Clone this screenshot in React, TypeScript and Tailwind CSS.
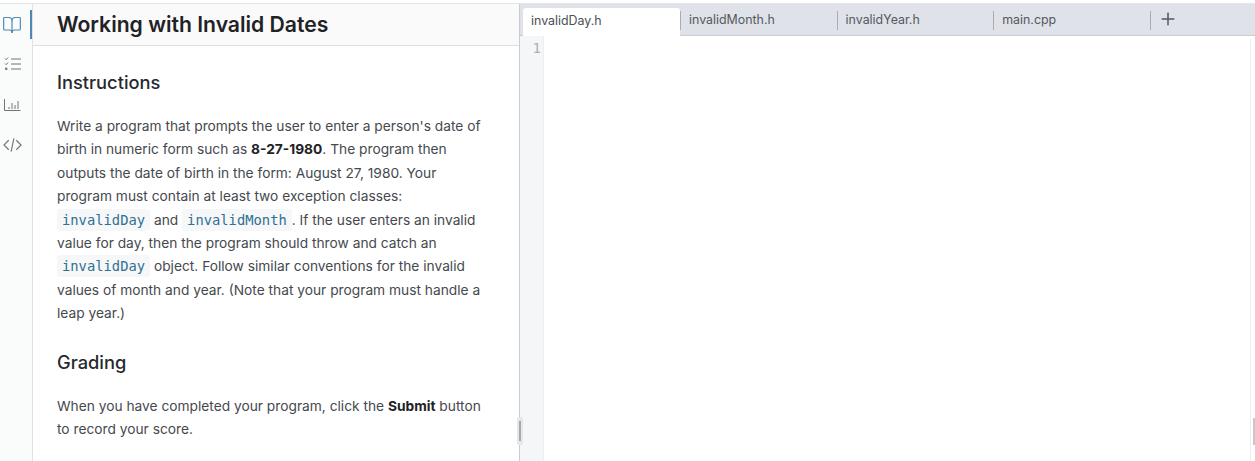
import { BookOpen, Plus } from 'lucide-react'

const font = "font-['Inter','Noto_Sans',sans-serif]"

function Code({ children }: { children: string }) {
  return (
    <code className="rounded-[3px] bg-[#f5f7f9] px-[5px] py-[3px] font-['DejaVu_Sans_Mono',monospace] text-[13.8px] leading-none text-[#31708f]">
      {children}
    </code>
  )
}

function Tab({ label, active }: { label: string; active?: boolean }) {
  if (active) {
    return (
      <div className="mt-[4px] flex h-[28px] w-[157px] shrink-0 items-center rounded-t-[3px] bg-white pb-[1px] pl-[8px] text-[#4a4f57]">
        {label}
      </div>
    )
  }
  return (
    <div className="flex h-[31px] w-[156.6px] shrink-0 items-center">
      <span className="mt-[1px] h-[19px] w-px bg-[#a9adb3]" />
      <span className="ml-[8px] mt-[1px] text-[#55595f]">{label}</span>
    </div>
  )
}

export default function App() {
  return (
    <div className={`flex h-[461px] w-[1255px] flex-col overflow-hidden bg-white ${font}`}>
      <div className="h-[4px] shrink-0 border-b border-[#e4e6e8] bg-white" />
      <div className="flex min-h-0 flex-1">
        {/* Icon rail */}
        <aside className="flex w-[33px] shrink-0 flex-col items-center border-r border-[#dfe2e5] bg-[#fafbfb]">
          <div className="relative flex h-[41px] w-full items-center justify-center">
            <BookOpen size={20} strokeWidth={1.4} className="mr-[8px] text-[#4f87b5]" />
            <span className="absolute right-0 top-[6px] h-[29px] w-[2px] bg-[#4f87b5]" />
          </div>
          <svg viewBox="0 0 17 14" className="mr-[8px] mt-[12px] h-[14px] w-[17px] text-[#6e747a]" fill="none" stroke="currentColor" strokeWidth="1">
            <path d="M7 2h10M7 7h10M7 12h10M1 1.500l1.200 1.200L4 .5M1 6.500l1.200 1.200L4 5.500M1.500 11h1.500v1.500h-1.500z" />
          </svg>
          <svg viewBox="0 0 17 12" className="mr-[8px] mt-[28px] h-[12px] w-[17px] text-[#6e747a]" fill="none" stroke="currentColor" strokeWidth="1">
            <path d="M.5 0v11.500h16M5 10V8M8 10V4M11 10V6M14 10V2" />
          </svg>
          <svg viewBox="0 0 20 16" className="mr-[8px] mt-[26px] h-[16px] w-[19px] text-[#6e747a]" fill="none" stroke="currentColor" strokeWidth="1.200">
            <path d="M6 3 1 8l5 5M14 3l5 5-5 5M11.500 1 8.500 15" />
          </svg>
        </aside>

        {/* Instructions panel */}
        <section className="flex w-[486px] shrink-0 flex-col">
          <header className="flex h-[42px] shrink-0 items-center border-b border-[#dcdfe2] bg-[#fafafa] pl-[24px]">
            <h1 className="text-[21.15px] leading-none font-semibold text-[#1f2226]">Working with Invalid Dates</h1>
          </header>
          <div className="pl-[24px] pr-[32px] text-[13.75px] leading-[23.4px] text-[#45494e]">
            <h2 className="mt-[24px] text-[18.3px] leading-[24px] font-medium text-[#26292d]">Instructions</h2>
            <p className="mt-[21px]">
              Write a program that prompts the user to enter a person's date of birth in numeric form such as{' '}
              <b className="font-bold text-[#1f2226]">8-27-1980</b>. The program then outputs the date of birth in the form: August 27, 1980. Your program must contain at least two exception classes:{' '}
              <Code>invalidDay</Code> and <Code>invalidMonth</Code>. If the user enters an invalid value for day, then the program should throw and catch an{' '}
              <Code>invalidDay</Code> object. Follow similar conventions for the invalid values of month and year. (Note that your program must handle a leap year.)
            </p>
            <h2 className="mt-[24px] text-[18.3px] leading-[24px] font-medium text-[#26292d]">Grading</h2>
            <p className="mt-[21px]">
              When you have completed your program, click the <b className="font-bold text-[#1f2226]">Submit</b> button to record your score.
            </p>
          </div>
        </section>

        {/* Editor */}
        <section className="relative flex min-w-0 flex-1 flex-col border-l border-[#c9ccd0]">
          <span className="absolute left-[-3px] top-[413px] flex h-[28px] w-[6px] items-center justify-center rounded-[2px] bg-[#e6e7e9]">
            <span className="h-[20px] w-[2px] bg-[#a5a8ac]" />
          </span>
          <div className="flex h-[32px] shrink-0 border-b border-[#c9ccd0] bg-[#dfe2e8] pl-[3px] text-[12.4px]">
            <Tab label="invalidDay.h" active />
            <Tab label="invalidMonth.h" />
            <Tab label="invalidYear.h" />
            <Tab label="main.cpp" />
            <div className="flex h-[31px] items-center">
              <span className="mt-[1px] h-[19px] w-px bg-[#a9adb3]" />
              <Plus size={20} strokeWidth={1.8} className="mb-[2px] ml-[7px] text-[#55595f]" />
            </div>
          </div>
          <div className="flex min-h-0 flex-1">
            <div className="w-[24px] border-r border-[#eceef0] bg-[#f5f6f7] pr-[2px] text-right font-['DejaVu_Sans_Mono',monospace] text-[14px] leading-[24px] text-[#adb0b4]">
              1
            </div>
            <div className="mt-[3px] flex-1 border-r border-[#eeeeee]" />
            <div className="flex w-[4px] flex-col justify-end">
              <span className="mb-[16px] ml-[2px] h-[27px] w-[2px] bg-[#c6c8cb]" />
            </div>
          </div>
        </section>
      </div>
    </div>
  )
}
